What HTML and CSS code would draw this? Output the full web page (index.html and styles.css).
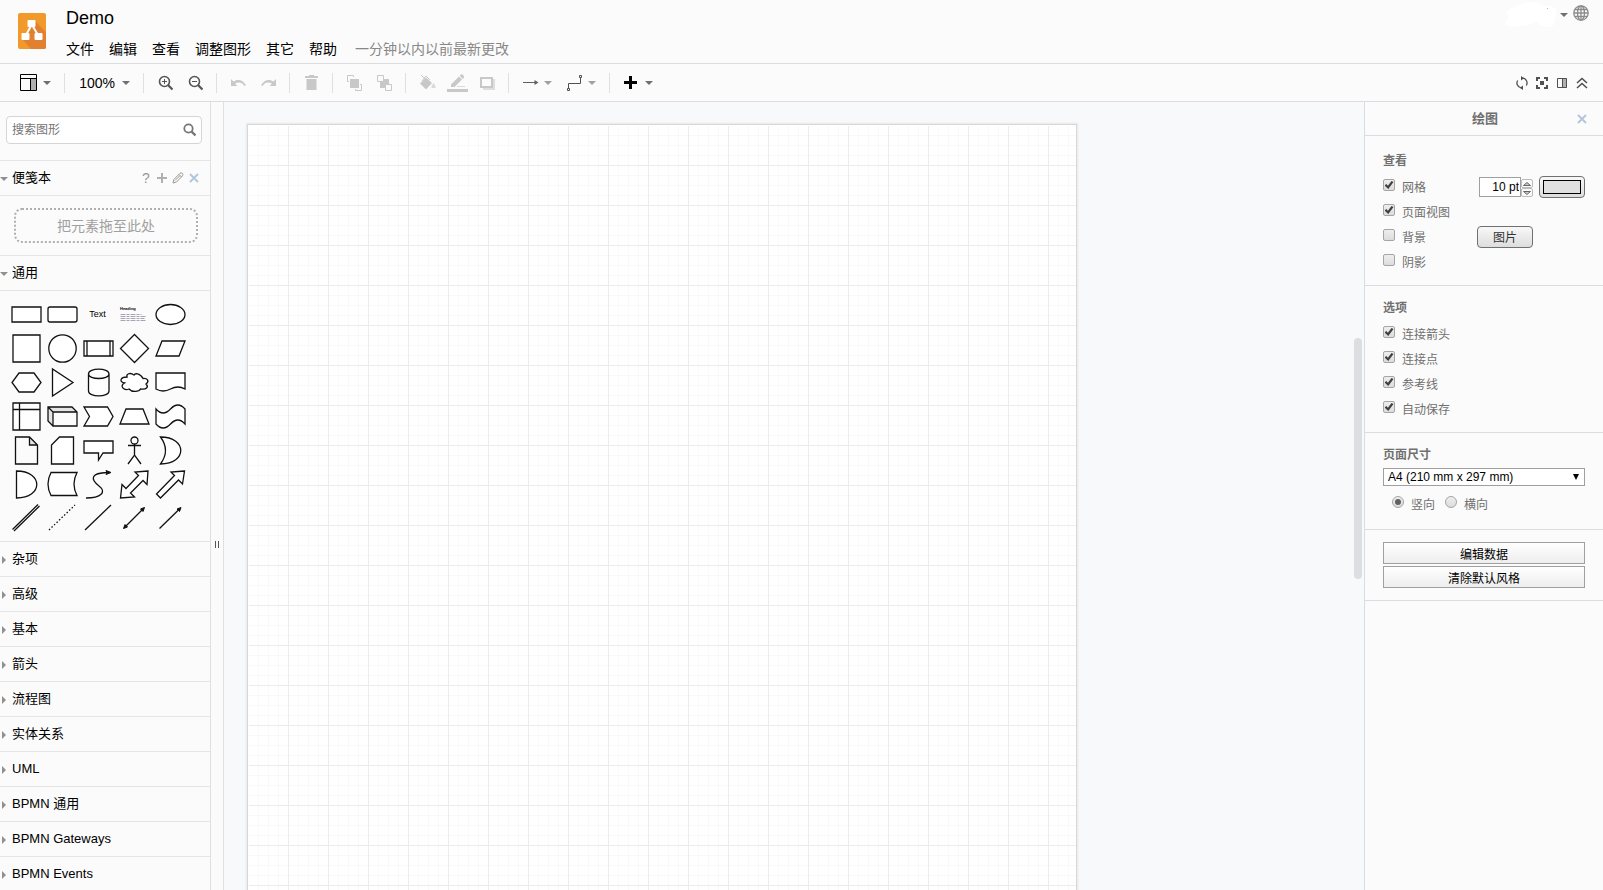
FILE: index.html
```html
<!DOCTYPE html>
<html lang="zh-CN">
<head>
<meta charset="UTF-8">
<meta name="viewport" content="width=device-width, initial-scale=1">
<title>Demo</title>
<link rel="stylesheet" href="styles.css">
</head>
<body>
  <header class="header">
    <svg class="logo" width="28" height="36" viewBox="0 0 28 36">
      <rect width="28" height="36" rx="2" fill="#f2992c"/>
      <path d="M17 8 28 19v15a2 2 0 0 1-2 2H13l-8-9 9-13z" fill="#e1802f"/>
      <path d="M13.500 12 8 22M14 12l6 10" stroke="#fff" stroke-width="2"/>
      <rect x="9.500" y="7" width="8" height="7" rx="1" fill="#fff"/>
      <rect x="3.500" y="20" width="8" height="7" rx="1" fill="#fff"/>
      <rect x="16.500" y="20" width="8" height="7" rx="1" fill="#fff"/>
    </svg>
    <div class="heading">
      <h1>Demo</h1>
      <nav class="menubar">
        <a href="#">文件</a>
        <a href="#">编辑</a>
        <a href="#">查看</a>
        <a href="#">调整图形</a>
        <a href="#">其它</a>
        <a href="#">帮助</a>
        <a href="#" class="status">一分钟以内以前最新更改</a>
      </nav>
    </div>
    <div class="account">
      <button class="user" aria-label="用户">
        <svg width="56" height="28" viewBox="0 0 56 28"><path d="M3 10Q18 0 34 1q4 5 13 4l6 3-4 17q-10 3-16-4-14 6-31 4-3-3 2-7z" fill="#fff"/><circle cx="43.500" cy="7.500" r=".6" fill="#f0a060"/></svg>
        <i class="caret"></i>
      </button>
      <button aria-label="语言">
        <svg width="16" height="16" viewBox="0 0 16 16" fill="none" stroke="#8c8c8c" stroke-width="1.300"><circle cx="8" cy="8" r="7.200"/><ellipse cx="8" cy="8" rx="3.500" ry="7.200"/><path d="M8 1v14M1 8h14M2 4.500h12M2 11.500h12"/></svg>
      </button>
    </div>
  </header>

  <div class="toolbar">
    <button class="drop" aria-label="视图">
      <svg width="18" height="18" viewBox="0 0 18 18"><path d="M11 5h5v11h-5z" fill="#b0b0b0"/><path d="M.5.5h16v16H.5zM.5 4.500h16M10.500 4.500v12" fill="none" stroke="#000"/></svg>
      <i class="caret"></i>
    </button>
    <span class="sep"></span>
    <button class="drop zoom">100%<i class="caret"></i></button>
    <span class="sep"></span>
    <button aria-label="放大">
      <svg width="16" height="16" viewBox="0 0 16 16" fill="none" stroke="#555"><circle cx="7.500" cy="6.500" r="5" stroke-width="1.600"/><path d="m11 10 4.500 4.500" stroke-width="2.200"/><path d="M7.500 4v5M5 6.500h5"/></svg>
    </button>
    <button aria-label="缩小">
      <svg width="16" height="16" viewBox="0 0 16 16" fill="none" stroke="#555"><circle cx="7.500" cy="6.500" r="5" stroke-width="1.600"/><path d="m11 10 4.500 4.500" stroke-width="2.200"/><path d="M5 6.500h5"/></svg>
    </button>
    <span class="sep"></span>
    <button aria-label="撤销" disabled>
      <svg width="16" height="16" viewBox="0 0 16 16"><path d="M1 4v7h6.500L5 8.700C8 6.700 12 7 14.500 11l1.500-.7C13 4.500 7.500 3.500 3.400 6.600z" fill="#c8c8c8"/></svg>
    </button>
    <button aria-label="重做" disabled>
      <svg width="16" height="16" viewBox="0 0 16 16"><path d="M16 4v7H9.500L12 8.700C9 6.700 5 7 2.500 11L1 10.300C4 4.500 9.500 3.500 13.600 6.600z" fill="#c8c8c8"/></svg>
    </button>
    <span class="sep"></span>
    <button aria-label="删除" disabled>
      <svg width="16" height="16" viewBox="0 0 16 16"><path d="M2 1h4V0h5v1h4v2H2zM3.500 4h10v11h-10z" fill="#c8c8c8"/></svg>
    </button>
    <span class="sep"></span>
    <button aria-label="移至最前" disabled>
      <svg width="16" height="16" viewBox="0 0 16 16" fill="none" stroke="#c8c8c8"><path d="M4 4h9v9H4z" fill="#c8c8c8" stroke="none"/><path d="M3 6.500H1.500v-6h6V2M14 9.500h1.500v6h-6V14"/></svg>
    </button>
    <button aria-label="移至最后" disabled>
      <svg width="16" height="16" viewBox="0 0 16 16" fill="none" stroke="#c8c8c8"><path d="M4 4h9v9H4z" fill="#c8c8c8" stroke="none"/><path d="M1.500.500h6v6h-6zM9.500 9.500h6v6h-6z" fill="#fbfbfb"/></svg>
    </button>
    <span class="sep"></span>
    <button aria-label="填充颜色" disabled>
      <svg width="18" height="18" viewBox="0 0 18 18"><path d="m8 3.500 6 5.500-5.500 6H7.500L2 9.500z" fill="#c8c8c8"/><path d="m3 1 5 5M8 2l4 4M8 2 4 7" stroke="#c8c8c8"/><path d="m15.500 9 2 3v2h-4v-2z" fill="#dadada"/></svg>
    </button>
    <button aria-label="线条颜色" disabled>
      <svg width="22" height="20" viewBox="0 0 22 20"><path d="M5 11.500 13 3.500l3 3L8.500 14H5zM13.800 2.700q1.500-2 3-1t1.200 2.800l-1.200 1.400z" fill="#c8c8c8"/><path d="M1 16h21v3H1z" fill="#c8c8c8"/><path d="M11 13.500h8" stroke="#dadada"/></svg>
    </button>
    <button aria-label="阴影" disabled>
      <svg width="16" height="16" viewBox="0 0 16 16"><path d="M4 4h12v11H4z" fill="#dedede"/><path d="M2 3h11v9H2z" fill="#fbfbfb" stroke="#c8c8c8" stroke-width="2"/></svg>
    </button>
    <span class="sep"></span>
    <button class="drop light" aria-label="连接">
      <svg width="16" height="16" viewBox="0 0 16 16"><path d="M0 7.500h13" stroke="#606060"/><path d="m11.500 5 4 2.500-4 2.500z" fill="#606060"/></svg>
      <i class="caret"></i>
    </button>
    <button class="drop light" aria-label="航点">
      <svg width="16" height="16" viewBox="0 0 16 16" fill="none" stroke="#505050"><path d="M1.500 13V8.500h12V3M.5 13.500h2v2h-2zM12.500.500h2v2h-2z"/></svg>
      <i class="caret"></i>
    </button>
    <span class="sep"></span>
    <button class="drop" aria-label="插入">
      <svg width="16" height="16" viewBox="0 0 16 16"><path d="M0 7.500h13M6.500 1v13" stroke="#000" stroke-width="3"/></svg>
      <i class="caret"></i>
    </button>
    <div class="view-tools">
      <button aria-label="刷新">
        <svg width="14" height="14" viewBox="0 0 14 14"><path d="M6.500 2.200H8A4.800 4.800 0 0 1 11.300 9.500M7.500 11.800H6A4.800 4.800 0 0 1 2.700 4.500" fill="none" stroke="#505050" stroke-width="1.300"/><path d="M9 2.200 6 0v4.500zM5 11.800 8 14V9.500z" fill="#505050"/></svg>
      </button>
      <button aria-label="全屏">
        <svg width="14" height="14" viewBox="0 0 14 14"><path d="M5 2H2v3M9 2h3v3M5 12H2V9M9 12h3V9" fill="none" stroke="#505050" stroke-width="2"/><path d="M5 5h4v4H5z" fill="#505050"/></svg>
      </button>
      <button aria-label="格式">
        <svg width="14" height="14" viewBox="0 0 14 14"><path d="M8 2h4v10H8z" fill="#b0b0b0"/><path d="M2.500 2.500h9v9h-9zM7.500 2v10" fill="none" stroke="#505050"/></svg>
      </button>
      <button aria-label="收起">
        <svg width="14" height="14" viewBox="0 0 14 14"><path d="m2 7 5-4.500L12 7M2 12l5-4.500 5 4.500" fill="none" stroke="#505050" stroke-width="1.600"/></svg>
      </button>
    </div>
  </div>

  <main class="workspace">
    <aside class="sidebar">
      <form class="search">
        <label class="search-box">
          <input type="text" placeholder="搜索图形" aria-label="搜索图形">
          <svg width="14" height="14" viewBox="0 0 14 14" fill="none" stroke="#777"><circle cx="6.500" cy="5.500" r="4.200" stroke-width="1.800"/><path d="m9.500 8.500 4 4" stroke-width="2.400"/></svg>
        </label>
      </form>

      <div class="section-title open">
        <button class="toggle">便笺本</button>
        <button class="tool help" aria-label="帮助">?</button>
        <button class="tool" aria-label="添加"><svg width="12" height="12" viewBox="0 0 12 12"><path d="M1 6h10M6 1v10" stroke="#b0b0b0" stroke-width="2"/></svg></button>
        <button class="tool" aria-label="编辑"><svg width="12" height="12" viewBox="0 0 12 12" fill="none" stroke="#999"><path d="m1 11 .8-3.500L8 1.300q1.200-1 2.300 0t.2 2.500L4.500 10zM7 2.500 9.500 5M3 8.500l5-5"/></svg></button>
        <button class="tool" aria-label="关闭"><svg width="10" height="10" viewBox="0 0 10 10"><path d="m1 1 8 8M9 1 1 9" stroke="#b4c6dc" stroke-width="2"/></svg></button>
      </div>
      <div class="scratchpad"><div class="dropzone">把元素拖至此处</div></div>

      <div class="section-title open"><button class="toggle">通用</button></div>
      <div class="palette">
        <svg viewBox="0 0 36 34"><path d="M4 10h29v15H4z"/></svg>
        <svg viewBox="0 0 36 34"><rect x="4" y="10" width="29" height="15" rx="2"/></svg>
        <svg viewBox="0 0 36 34"><text x="17.500" y="20" class="shape-text">Text</text></svg>
        <svg viewBox="0 0 36 34"><text x="4" y="13" class="shape-heading">Heading</text><path class="lorem" d="M4.500 17.500h21M4.500 19.500h26M4.500 21.500h24M4.500 23.500h25"/></svg>
        <svg viewBox="0 0 36 34"><ellipse cx="18.500" cy="17.500" rx="14.500" ry="10"/></svg>

        <svg viewBox="0 0 36 34"><path d="M5 4h27v27H5z"/></svg>
        <svg viewBox="0 0 36 34"><circle cx="18.500" cy="17.500" r="13.700"/></svg>
        <svg viewBox="0 0 36 34"><path d="M4 10h29v15H4zM7 10v15M30 10v15"/></svg>
        <svg viewBox="0 0 36 34"><path d="m18.500 3.500 14 14-14 14-14-14z"/></svg>
        <svg viewBox="0 0 36 34"><path d="M10 10h23l-6 15H4z"/></svg>

        <svg viewBox="0 0 36 34"><path d="M11 8h15l7 9.500-7 9.500H11l-7-9.500z"/></svg>
        <svg viewBox="0 0 36 34"><path d="M8.500 4v27L29 17.500z"/></svg>
        <svg viewBox="0 0 36 34"><path d="M8.500 9c0-6.500 20.500-6.500 20.500 0v17c0 6.500-20.500 6.500-20.500 0zc0 6 20.500 6 20.500 0"/></svg>
        <svg viewBox="0 0 36 34"><path d="M11 12C4 12 3 17 8.500 18 3 21 8 26 13 24c3 3.500 10 3 11.500 0 6 1 8.500-2 5.500-5 4-3 1-6-3-5.500C24 8 19 8 18 10c-4-3-8-1-7 2z"/></svg>
        <svg viewBox="0 0 36 34"><path d="M4 8h29v16q-7-4-14.500 0T4 24z"/></svg>

        <svg viewBox="0 0 36 34"><path d="M5 4h27v27H5zM11.500 4v27M5 10.500h27"/></svg>
        <svg viewBox="0 0 36 34"><path class="shade" d="M4 8h24l5 5H9v14l-5-5z"/><path d="M4 8h24l5 5v14H9l-5-5zM4 8l5 5v14M9 13h24"/></svg>
        <svg viewBox="0 0 36 34"><path d="M4 8h23.500l5.500 9.500-5.500 9.500H4l5.500-9.500z"/></svg>
        <svg viewBox="0 0 36 34"><path d="M10 10h17l6 15H4z"/></svg>
        <svg viewBox="0 0 36 34"><path d="M4 10q7 8 14.500 0T33 10v15q-7-8-14.500 0T4 25z"/></svg>

        <svg viewBox="0 0 36 34"><path class="shade" d="M21.500 4v8h8z"/><path d="M7.500 4h14l8 8v19h-22zM21.500 4v8h8"/></svg>
        <svg viewBox="0 0 36 34"><path d="M15.500 4h14v27h-22V12z"/></svg>
        <svg viewBox="0 0 36 34"><path d="M4 8h29v12H23l-4.500 7v-7H4z"/></svg>
        <svg viewBox="0 0 36 34"><circle cx="18.500" cy="7.500" r="3.500"/><path d="M18.500 11v11M12 12.500h13M12 31l6.500-9 6.500 9"/></svg>
        <svg viewBox="0 0 36 34"><path d="M8.500 4c27 0 27 27 0 27q10-13.500 0-27z"/></svg>

        <svg viewBox="0 0 36 34"><path d="M8.500 4c27 0 27 27 0 27z"/></svg>
        <svg viewBox="0 0 36 34"><path d="M7 5.500h26q-6 11.500 0 23H7q-6-11.500 0-23z"/></svg>
        <svg viewBox="0 0 36 34"><path class="open-line" d="M6 31C21 31 27 25 19 19 10 12 11 6 27 5.500"/><path class="head" d="m31 5.500-5-2 1.200 2L26 7.500z"/></svg>
        <svg viewBox="0 0 36 34"><path d="m32 4-13 1 3.500 3.500L10 21.500 6 17.500 4.500 31l14-1-4-4L27 13.500l4 4z"/></svg>
        <svg viewBox="0 0 36 34"><path d="m32.500 4-13.500 1 3.500 3.500L4.500 27l4 4 18-18 4 4z"/></svg>

        <svg viewBox="0 0 36 34"><path d="M4.500 28.500 30 3.500M6 30 31.500 5"/></svg>
        <svg viewBox="0 0 36 34"><path d="M5 29 31 4" stroke-dasharray="1.500 2"/></svg>
        <svg viewBox="0 0 36 34"><path d="M5 29 31 4"/></svg>
        <svg viewBox="0 0 36 34"><path d="m9 26 18-18"/><path class="head" d="m28.500 6.500-4 1.500 2.500 2.500zM7.500 27.500l4-1.500L9 23.500z"/></svg>
        <svg viewBox="0 0 36 34"><path d="m7.500 27.500 20-19.500"/><path class="head" d="m29 6.500-4 1.500 2.500 2.500z"/></svg>
      </div>

      <div class="section-title"><button class="toggle">杂项</button></div>
      <div class="section-title"><button class="toggle">高级</button></div>
      <div class="section-title"><button class="toggle">基本</button></div>
      <div class="section-title"><button class="toggle">箭头</button></div>
      <div class="section-title"><button class="toggle">流程图</button></div>
      <div class="section-title"><button class="toggle">实体关系</button></div>
      <div class="section-title"><button class="toggle">UML</button></div>
      <div class="section-title"><button class="toggle">BPMN 通用</button></div>
      <div class="section-title"><button class="toggle">BPMN Gateways</button></div>
      <div class="section-title"><button class="toggle">BPMN Events</button></div>
    </aside>

    <div class="splitter"><span class="grip"></span></div>

    <section class="canvas">
      <div class="page"></div>
      <div class="scroll-thumb"></div>
    </section>

    <aside class="format">
      <div class="format-title">
        <h2>绘图</h2>
        <button aria-label="关闭"><svg width="10" height="10" viewBox="0 0 10 10"><path d="m1 1 8 8M9 1 1 9" stroke="#b4c6dc" stroke-width="2"/></svg></button>
      </div>

      <div class="panel panel-view">
        <h3>查看</h3>
        <div class="option">
          <label><input type="checkbox" checked><span>网格</span></label>
          <input type="text" class="grid-size" value="10 pt" aria-label="网格大小">
          <div class="stepper">
            <button aria-label="增加"><svg width="8" height="4" viewBox="0 0 8 4"><path d="m.5 3.500 3.500-3 3.500 3z" fill="#ccc" stroke="#666"/></svg></button>
            <button aria-label="减少"><svg width="8" height="4" viewBox="0 0 8 4"><path d="m.5.5 3.500 3 3.500-3z" fill="#ccc" stroke="#666"/></svg></button>
          </div>
          <button class="gel color" aria-label="网格颜色"><span></span></button>
        </div>
        <div class="option"><label><input type="checkbox" checked><span>页面视图</span></label></div>
        <div class="option">
          <label><input type="checkbox"><span>背景</span></label>
          <button class="gel image">图片</button>
        </div>
        <div class="option"><label><input type="checkbox"><span>阴影</span></label></div>
      </div>

      <div class="panel">
        <h3>选项</h3>
        <div class="option"><label><input type="checkbox" checked><span>连接箭头</span></label></div>
        <div class="option"><label><input type="checkbox" checked><span>连接点</span></label></div>
        <div class="option"><label><input type="checkbox" checked><span>参考线</span></label></div>
        <div class="option"><label><input type="checkbox" checked><span>自动保存</span></label></div>
      </div>

      <div class="panel">
        <h3><label for="pageSize">页面尺寸</label></h3>
        <div class="select-box">
          <select id="pageSize"><option>A4 (210 mm x 297 mm)</option></select>
        </div>
        <div class="option orientation">
          <label><input type="radio" name="orientation" checked><span>竖向</span></label>
          <label><input type="radio" name="orientation"><span>横向</span></label>
        </div>
      </div>

      <div class="panel panel-actions">
        <button>编辑数据</button>
        <button>清除默认风格</button>
      </div>
    </aside>
  </main>
</body>
</html>
```
FILE: styles.css
```css
* {
  box-sizing: border-box;
}
body {
  margin: 0;
  height: 100vh;
  display: flex;
  flex-direction: column;
  overflow: hidden;
  background: #fbfbfb;
  color: #000;
  font-family: "Liberation Sans", "Noto Sans CJK SC", sans-serif;
  font-size: 13px;
}
button {
  padding: 0;
  border: none;
  background: none;
  color: inherit;
  font: inherit;
  cursor: pointer;
}
button:disabled {
  cursor: default;
}
h1, h2, h3 {
  margin: 0;
}
svg {
  display: block;
  flex: none;
}
.caret {
  border: 4px solid transparent;
  border-top-color: #707070;
  border-bottom: none;
}

/* Header */
.header {
  display: flex;
  height: 64px;
  padding-left: 18px;
  border-bottom: 1px solid #dadce0;
}
.logo {
  margin-top: 13px;
}
.heading {
  flex: 1;
  padding: 7px 0 0 20px;
}
h1 {
  font-size: 18px;
  line-height: 22px;
  font-weight: normal;
}
.menubar {
  display: flex;
  gap: 15px;
  margin-top: 9px;
  font-size: 14px;
  line-height: 22px;
}
.menubar a {
  color: inherit;
  text-decoration: none;
}
.menubar .status {
  margin-left: 3px;
  color: #888;
}
.account {
  display: flex;
  align-items: flex-start;
  gap: 5px;
  padding: 5px 14px 0 0;
}
.user {
  display: flex;
  align-items: center;
  height: 20px;
}

/* Toolbar */
.toolbar {
  display: flex;
  align-items: center;
  height: 38px;
  padding: 0 11px 0 14px;
  border-bottom: 1px solid #dadce0;
}
.toolbar button {
  display: flex;
  align-items: center;
  justify-content: center;
  width: 30px;
  height: 30px;
}
.toolbar .drop {
  width: 44px;
  justify-content: flex-end;
  gap: 5px;
  padding-right: 7px;
}
.toolbar .zoom {
  width: 66px;
  gap: 7px;
  font-size: 14px;
}
.light .caret {
  border-top-color: #a0a0a0;
}
.sep {
  width: 1px;
  height: 20px;
  margin: 0 6px;
  background: #e0e0e0;
}
.view-tools {
  display: flex;
  margin-left: auto;
}
.toolbar .view-tools button {
  width: 20px;
}

/* Sidebar */
.workspace {
  flex: 1;
  min-height: 0;
  display: flex;
}
.sidebar {
  width: 211px;
  flex: none;
  overflow: hidden;
  border-right: 1px solid #e0e0e0;
}
.search {
  padding: 14px 8px 16px 6px;
  border-bottom: 1px solid #e5e5e5;
}
.search-box {
  display: flex;
  align-items: center;
  height: 28px;
  padding: 0 5px;
  border: 1px solid #d5d5d5;
  border-radius: 4px;
  background: #fff;
}
.search-box input {
  flex: 1;
  min-width: 0;
  padding: 0;
  border: none;
  outline: none;
  font: inherit;
  font-size: 12px;
}
.search-box input::placeholder {
  color: #757575;
}
.section-title {
  display: flex;
  align-items: center;
  height: 35px;
  padding-right: 8px;
  border-bottom: 1px solid #e5e5e5;
}
.toggle {
  flex: 1;
  display: flex;
  align-items: center;
  gap: 6px;
  height: 34px;
  padding-left: 2px;
  line-height: 16px;
}
.toggle::before {
  content: "";
  margin-top: 2px;
  border: 4px solid transparent;
  border-left-color: #909090;
  border-right: none;
}
.open .toggle {
  gap: 4px;
  padding-left: 0;
}
.open .toggle::before {
  border: 4px solid transparent;
  border-top-color: #909090;
  border-bottom: none;
}
.tool {
  display: flex;
  align-items: center;
  justify-content: center;
  width: 16px;
  height: 16px;
  color: #999;
}
.help {
  font-size: 14px;
}
.scratchpad {
  padding: 12px 12px 12px 14px;
  border-bottom: 1px solid #e5e5e5;
}
.dropzone {
  height: 35px;
  border: 2px dotted #b0b0b0;
  border-radius: 8px;
  color: #a0a0a0;
  font-size: 14px;
  line-height: 33px;
  text-align: center;
}
.palette {
  display: grid;
  grid-template-columns: repeat(5, 36px);
  grid-auto-rows: 34px;
  padding: 6px 8px;
  border-bottom: 1px solid #e5e5e5;
}
.palette svg {
  width: 36px;
  height: 34px;
  fill: #fff;
  stroke: #111;
  stroke-width: 1.3px;
}
.palette .shade {
  fill: #e4e4e4;
  stroke: none;
}
.palette .shade + path {
  fill: none;
}
.palette .open-line {
  fill: none;
}
.palette .head {
  fill: #111;
  stroke-width: 1px;
}
.palette text {
  fill: #000;
  stroke: none;
}
.shape-text {
  font-size: 9px;
  text-anchor: middle;
}
.shape-heading {
  font-size: 4px;
  font-weight: bold;
}
.palette .lorem {
  stroke: #a8a4b4;
  stroke-width: 1px;
  stroke-dasharray: 5 1 3 1;
}

/* Canvas */
.splitter {
  display: flex;
  align-items: center;
  justify-content: center;
  width: 13px;
  flex: none;
  border-right: 1px solid #e0e0e0;
}
.grip {
  width: 4px;
  height: 7px;
  margin-top: 96px;
  border: 1px solid #555;
  border-width: 0 1px;
}
.canvas {
  position: relative;
  flex: 1;
  min-width: 0;
  padding: 22px 0 0 23px;
  overflow: hidden;
  background: #f8f9fb;
}
/* A4 sheet at 100% zoom */
.page {
  width: 830px;
  height: 1171px;
  border: 1px solid #d8d8d8;
  background-color: #fff;
  background-image:
    linear-gradient(#ececec 1px, transparent 1px),
    linear-gradient(90deg, #ececec 1px, transparent 1px),
    linear-gradient(#f9f9f9 1px, transparent 1px),
    linear-gradient(90deg, #f9f9f9 1px, transparent 1px);
  background-size: 40px 40px, 40px 40px, 10px 10px, 10px 10px;
  box-shadow: 0 0 2px 1px #e8e8e8, inset 1px 1px #fff;
}
.scroll-thumb {
  position: absolute;
  top: 30%;
  right: 2px;
  width: 8px;
  height: 241px;
  border-radius: 4px;
  background: #dddee1;
}

/* Format panel */
.format {
  width: 239px;
  flex: none;
  border-left: 1px solid #dadce0;
  color: #707070;
  font-size: 12px;
}
.format-title {
  display: flex;
  align-items: center;
  height: 34px;
  padding-right: 16px;
  border-bottom: 1px solid #dadce0;
}
h2 {
  flex: 1;
  padding-left: 28px;
  font-size: 13px;
  line-height: 16px;
  text-align: center;
}
.panel {
  padding: 10px 18px 11px;
  border-bottom: 1px solid #dadce0;
}
.panel-view {
  padding-top: 13px;
}
h3 {
  font-size: 12px;
  line-height: 25px;
}
.option {
  display: flex;
  align-items: center;
  height: 25px;
}
.option label {
  display: flex;
  width: 96px;
  gap: 7px;
}
.option label span {
  padding-top: 3px;
  line-height: 16px;
}
input[type="checkbox"],
input[type="radio"] {
  appearance: none;
  display: grid;
  place-items: center;
  width: 12px;
  height: 12px;
  margin: 2px 0 0;
  border: 1px solid #a5a5a5;
  border-radius: 2px;
  background: linear-gradient(#eee, #dcdcdc);
}
input[type="radio"] {
  border-radius: 50%;
}
input[type="checkbox"]:checked::before {
  content: "";
  width: 9px;
  height: 8px;
  background: #404040;
  clip-path: polygon(0 55%, 20% 38%, 38% 58%, 78% 0, 100% 14%, 42% 100%);
}
input[type="radio"]:checked::before {
  content: "";
  width: 6px;
  height: 6px;
  border-radius: 50%;
  background: #606060;
}
.grid-size {
  width: 42px;
  height: 20px;
  padding: 0 1px;
  border: 1px solid #a0a0a0;
  font: inherit;
  text-align: right;
}
.stepper {
  display: flex;
  flex-direction: column;
  margin: 3px 6px 0 0;
}
.stepper button {
  display: grid;
  place-items: center;
  width: 12px;
  height: 9px;
  border: 1px solid #bbb;
  border-radius: 2px;
}
.gel {
  height: 22px;
  border: 1px solid #707070;
  border-radius: 4px;
  background: linear-gradient(#f8f8f8, #ddd);
  color: #333;
}
.color {
  width: 46px;
  padding: 3px;
}
.color span {
  display: block;
  height: 14px;
  border: 1px solid #000;
  background: #e0e0e0;
}
.image {
  width: 56px;
  margin-left: -2px;
}
.select-box {
  position: relative;
}
.select-box::after {
  content: "";
  position: absolute;
  top: 6px;
  right: 6px;
  border: 3px solid transparent;
  border-top: 6px solid #000;
  border-bottom: none;
  pointer-events: none;
}
select {
  appearance: none;
  display: block;
  width: 100%;
  height: 18px;
  padding: 0 4px;
  border: 1px solid #a0a0a0;
  border-radius: 0;
  background: #fff;
  color: #000;
  font: inherit;
}
.orientation {
  gap: 10px;
  margin: 5px 0 2px 9px;
}
.orientation label {
  width: auto;
}
.panel-actions {
  display: flex;
  flex-direction: column;
  gap: 2px;
  padding: 12px 18px;
}
.panel-actions button {
  height: 22px;
  border: 1px solid #a0a0a0;
  background: linear-gradient(#fff, #eee);
  color: #000;
}
```
